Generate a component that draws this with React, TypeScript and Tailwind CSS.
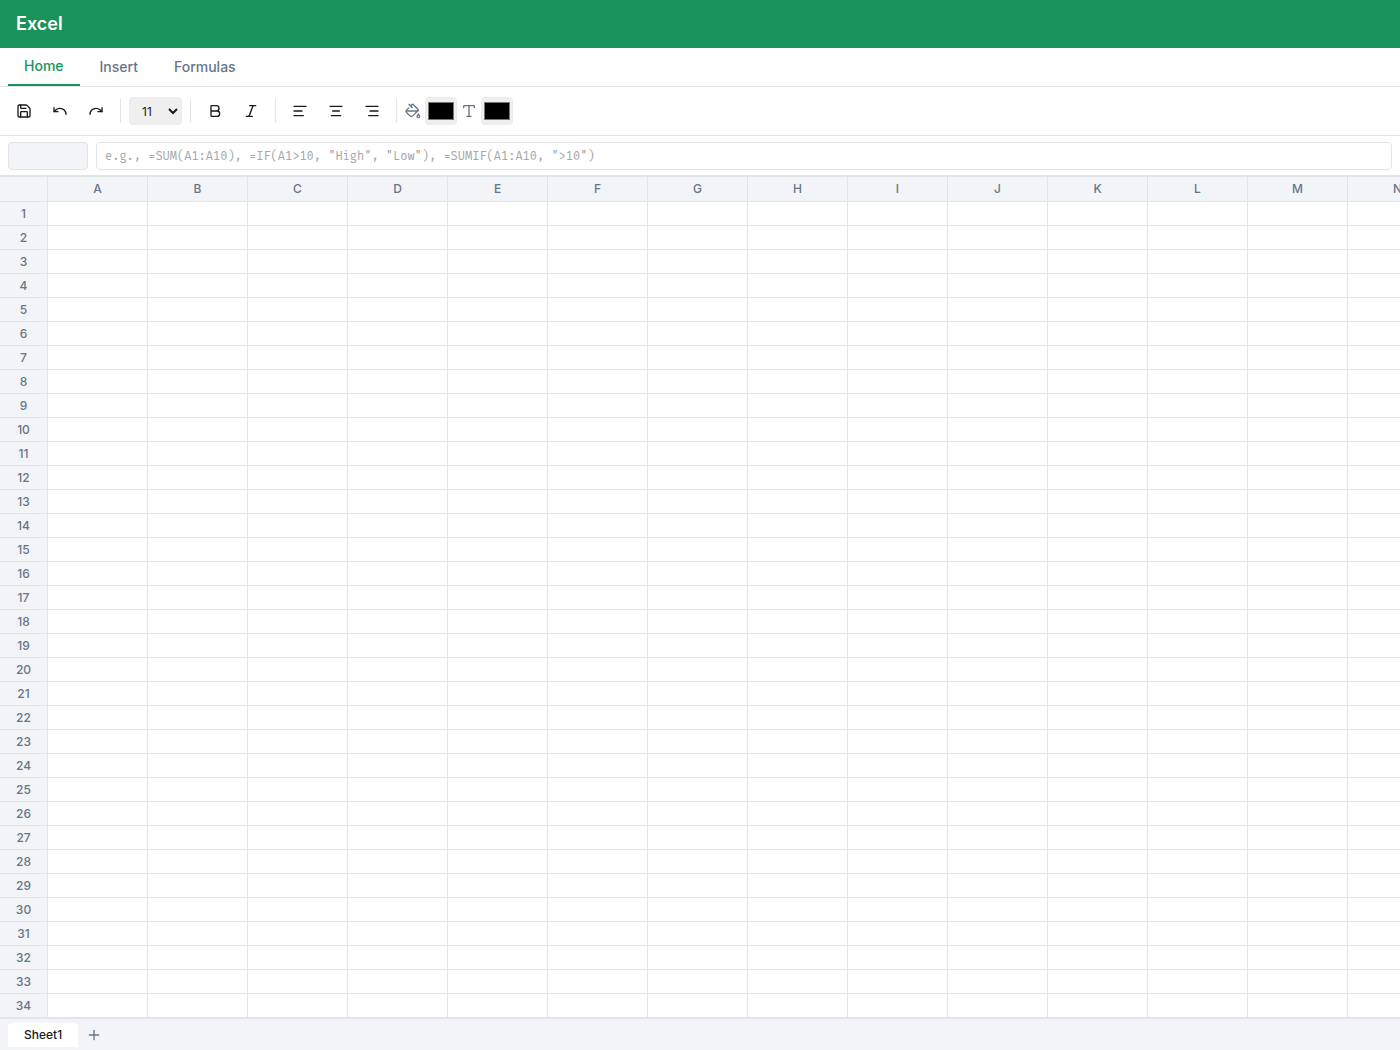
import { useState } from "react"
import {
  AlignCenter,
  AlignLeft,
  AlignRight,
  Bold,
  Italic,
  PaintBucket,
  Plus,
  Redo,
  Save,
  Type,
  Undo,
  type LucideIcon,
} from "lucide-react"

const TABS = ["Home", "Insert", "Formulas"]
const FONT_SIZES = [8, 9, 10, 11, 12, 14, 16, 18, 20, 24]
const COLUMNS = Array.from({ length: 14 }, (_, i) => String.fromCharCode(65 + i))
const ROWS = Array.from({ length: 34 }, (_, i) => i + 1)

function ToolButton({ icon: Icon, label }: { icon: LucideIcon; label: string }) {
  return (
    <button
      type="button"
      aria-label={label}
      className="flex size-8 shrink-0 items-center justify-center rounded hover:bg-[#f2f4f7]"
    >
      <Icon className="size-4" />
    </button>
  )
}

function Divider() {
  return <div className="mx-1 h-6 w-px shrink-0 bg-[#e1e5e8]" />
}

function ColorPicker({ icon: Icon, label }: { icon: LucideIcon; label: string }) {
  return (
    <label className="flex items-center gap-1">
      <Icon className="size-4 text-[#677489]" />
      <input
        type="color"
        aria-label={label}
        defaultValue="#000000"
        className="h-7 w-8 cursor-pointer rounded border border-[#e9ebed] bg-[#efefef]"
      />
    </label>
  )
}

export default function App() {
  const [tab, setTab] = useState("Home")
  const [formula, setFormula] = useState("")

  return (
    <div className="flex h-screen flex-col bg-white font-['Inter',sans-serif] text-[#171a1f]">
      <header className="flex h-12 shrink-0 items-center bg-[#189359] px-4">
        <h1 className="text-lg font-semibold text-white">Excel</h1>
      </header>

      {/* Ribbon tabs */}
      <nav className="flex shrink-0 gap-1 border-b border-[#e1e5e8] px-2">
        {TABS.map(t => (
          <button
            key={t}
            type="button"
            onClick={() => setTab(t)}
            className={`px-4 py-2 text-sm font-medium ${
              t === tab ? "border-b-2 border-[#189359] text-[#189359]" : "text-[#677489]"
            }`}
          >
            {t}
          </button>
        ))}
      </nav>

      {/* Toolbar */}
      <div className="flex shrink-0 items-center gap-1 border-b border-[#e1e5e8] p-2">
        <ToolButton icon={Save} label="Save" />
        <ToolButton icon={Undo} label="Undo" />
        <ToolButton icon={Redo} label="Redo" />
        <Divider />
        <select
          aria-label="Font size"
          defaultValue={11}
          className="h-7 rounded border border-[#e9ebed] bg-[#efefef] px-2 text-xs"
        >
          {FONT_SIZES.map(s => (
            <option key={s} value={s}>{s}</option>
          ))}
        </select>
        <Divider />
        <ToolButton icon={Bold} label="Bold" />
        <ToolButton icon={Italic} label="Italic" />
        <Divider />
        <ToolButton icon={AlignLeft} label="Align left" />
        <ToolButton icon={AlignCenter} label="Align center" />
        <ToolButton icon={AlignRight} label="Align right" />
        <Divider />
        <ColorPicker icon={PaintBucket} label="Fill color" />
        <ColorPicker icon={Type} label="Text color" />
      </div>

      {/* Formula bar */}
      <div className="flex h-10 shrink-0 items-center gap-2 border-b border-[#e1e5e8] px-2">
        <input
          aria-label="Selected cell"
          readOnly
          className="h-7 w-20 rounded border border-[#e1e5e8] bg-[#f2f4f7] px-2 text-center text-xs"
        />
        <input
          aria-label="Formula"
          value={formula}
          onChange={e => setFormula(e.target.value)}
          placeholder={'e.g., =SUM(A1:A10), =IF(A1>10, "High", "Low"), =SUMIF(A1:A10, ">10")'}
          className="h-7 min-w-0 flex-1 rounded border border-[#e1e5e8] px-2 font-['Fira_Mono','Liberation_Mono',monospace] text-xs placeholder:text-[#a3a7a9]"
        />
      </div>

      {/* Grid */}
      <main className="min-h-0 flex-1 overflow-auto border-t border-[#e1e5e8] [scrollbar-width:none]">
        <table className="w-max table-fixed border-separate border-spacing-0 text-xs">
          <thead>
            <tr>
              <th className="sticky top-0 left-0 z-20 h-[25px] w-12 border-r border-b border-[#e1e5e8] bg-[#f2f4f7] p-0" />
              {COLUMNS.map(c => (
                <th
                  key={c}
                  scope="col"
                  className="sticky top-0 z-10 h-[25px] w-[100px] border-r border-b border-[#e1e5e8] bg-[#f2f4f7] p-0 font-medium text-[#677489]"
                >
                  {c}
                </th>
              ))}
            </tr>
          </thead>
          <tbody>
            {ROWS.map(r => (
              <tr key={r}>
                <th
                  scope="row"
                  className="sticky left-0 h-6 border-r border-b border-[#e1e5e8] bg-[#f2f4f7] p-0 font-medium text-[#677489]"
                >
                  {r}
                </th>
                {COLUMNS.map(c => (
                  <td key={c} className="h-6 border-r border-b border-[#e1e5e8] p-0" />
                ))}
              </tr>
            ))}
          </tbody>
        </table>
      </main>

      {/* Sheet tabs */}
      <footer className="flex h-8 shrink-0 items-center gap-1 border-t border-[#e1e5e8] bg-[#f2f4f7] px-2">
        <button type="button" className="h-6 rounded-t bg-white px-4 text-xs font-medium">
          Sheet1
        </button>
        <button type="button" aria-label="Add sheet" className="rounded p-1 text-[#677489]">
          <Plus className="size-4" />
        </button>
      </footer>
    </div>
  )
}
